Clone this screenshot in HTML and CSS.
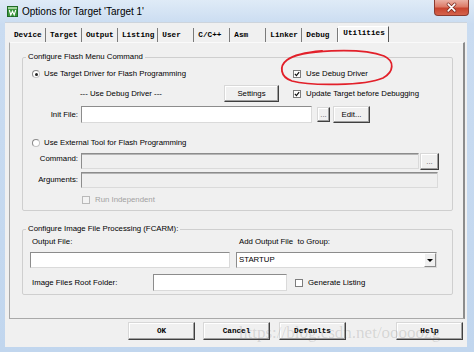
FILE: index.html
```html
<!DOCTYPE html>
<html lang="en">
<head>
    <meta charset="UTF-8">
    <title>Options for Target 'Target 1'</title>
    <link rel="stylesheet" href="styles.css">
</head>
<body>
<div class="window">
    <div class="titlebar">
        <svg class="app-icon" viewBox="0 0 11 11">
            <rect x="0.5" y="0.5" width="10" height="10" fill="#3b963c" stroke="#1f6a26"/>
            <rect x="1" y="1" width="9" height="2" fill="#9fd49a"/>
            <path d="M2.3 4 L3.8 9 L5.5 5.2 L7.2 9 L8.7 4" fill="none" stroke="#fff" stroke-width="1.1"/>
        </svg>
        <span class="title">Options for Target 'Target 1'</span>
        <div class="close-btn">
            <svg viewBox="0 0 35 16">
                <path d="M14 4.5 L21 11.5 M21 4.5 L14 11.5" stroke="#7a2a20" stroke-width="3.4" stroke-linecap="round"/>
                <path d="M14 4.5 L21 11.5 M21 4.5 L14 11.5" stroke="#fff" stroke-width="1.8" stroke-linecap="round"/>
            </svg>
        </div>
    </div>

    <div class="client">
        <div class="tabs">
            <span class="tab">Device</span>
            <span class="tab">Target</span>
            <span class="tab">Output</span>
            <span class="tab">Listing</span>
            <span class="tab">User</span>
            <span class="tab">C/C++</span>
            <span class="tab">Asm</span>
            <span class="tab">Linker</span>
            <span class="tab">Debug</span>
            <span class="tab active">Utilities</span>
        </div>

        <div class="tabpage">
            <!-- Flash menu -->
            <fieldset class="group flash">
                <legend>Configure Flash Menu Command</legend>

                <div class="row r1">
                    <div class="cell-left">
                        <span class="radio on"></span>
                        <span>Use Target Driver for Flash Programming</span>
                    </div>
                    <span class="check on"><svg viewBox="0 0 7 7"><path d="M1 3.4 L2.8 5.3 L6 1.2"/></svg></span>
                    <span class="check-label">Use Debug Driver</span>
                </div>

                <div class="row r2">
                    <div class="cell-driver">--- Use Debug Driver ---</div>
                    <div class="btn sans settings">Settings</div>
                    <span class="check on"><svg viewBox="0 0 7 7"><path d="M1 3.4 L2.8 5.3 L6 1.2"/></svg></span>
                    <span class="check-label">Update Target before Debugging</span>
                </div>

                <div class="row r3">
                    <label class="lbl">Init File:</label>
                    <div class="field init"></div>
                    <div class="btn sans dots small">...</div>
                    <div class="btn sans edit">Edit...</div>
                </div>

                <div class="row r4">
                    <span class="radio"></span>
                    <span>Use External Tool for Flash Programming</span>
                </div>

                <div class="row r5">
                    <label class="lbl">Command:</label>
                    <div class="field off command"></div>
                    <div class="btn sans dots cmd">...</div>
                </div>

                <div class="row r6">
                    <label class="lbl">Arguments:</label>
                    <div class="field off args"></div>
                </div>

                <div class="row r7">
                    <span class="check off"></span>
                    <span class="check-label disabled">Run Independent</span>
                </div>
            </fieldset>

            <!-- Image file processing -->
            <fieldset class="group image">
                <legend>Configure Image File Processing (FCARM):</legend>

                <div class="row ra">
                    <div class="cell-out">Output File:</div>
                    <div>Add Output File&nbsp; to Group:</div>
                </div>

                <div class="row rb">
                    <div class="field output"></div>
                    <div class="combo">
                        <span class="combo-text">STARTUP</span>
                        <span class="combo-arrow"><i></i></span>
                    </div>
                </div>

                <div class="row rc">
                    <div class="cell-root">Image Files Root Folder:</div>
                    <div class="field root"></div>
                    <span class="check gen"></span>
                    <span class="check-label">Generate Listing</span>
                </div>
            </fieldset>
        </div>

        <div class="buttons">
            <div class="btn dlg ok">OK</div>
            <div class="btn dlg cancel">Cancel</div>
            <div class="btn dlg defaults">Defaults</div>
            <div class="btn dlg help">Help</div>
        </div>
    </div>

    <div class="watermark">https://blog.csdn.net/ooooozg</div>

    <svg class="mark" viewBox="0 0 474 352">
        <path d="M287 60 C300 50, 360 47, 384 56 C395 61, 394 72, 383 78 C365 86, 310 86, 292 81 C280 77, 279 66, 287 60 C295 54, 310 52, 322 51"/>
    </svg>
</div>
</body>
</html>
```

FILE: styles.css
```css
body {
    margin: 0;
    font-family: "Liberation Sans", Arial, sans-serif;
    font-size: 7.8px;
    line-height: 12px;
    color: #000;
    background: #c4d9f0;
}

.window {
    position: relative;
    width: 474px;
    height: 352px;
    overflow: hidden;
    background: linear-gradient(#dfebf7, #cadcf1 24px, #c1d6ee);
}

/* title bar */
.titlebar {
    display: flex;
    align-items: center;
    height: 22px;
    padding: 0 5px 0 7px;
}

.app-icon {
    width: 11px;
    height: 11px;
}

.title {
    margin: 2px 0 0 4px;
    font-size: 10px;
}

.close-btn {
    align-self: flex-start;
    margin-left: auto;
    width: 35px;
    height: 16px;
    box-sizing: border-box;
    border: 1px solid #8b3b30;
    border-top: none;
    border-radius: 0 0 4px 4px;
    background: linear-gradient(#eab0a4, #dc7b68 45%, #c8442f 55%, #d4634c);
}

.close-btn svg {
    display: block;
    width: 33px;
    height: 15px;
}

/* client area */
.client {
    box-sizing: border-box;
    height: 325px;
    margin: 0 7px 0 5px;
    background: #f0f0f0;
    border-top: 1px solid #cdd4dc;
}

.tabs {
    display: flex;
    align-items: flex-end;
    height: 19px;
    padding-left: 5px;
}

.tab {
    box-sizing: border-box;
    min-width: 36px;
    height: 14px;
    padding: 0 3px 0 4px;
    border-right: 1px solid #7a7a7a;
    font: bold 7.7px/14px "Liberation Mono", monospace;
    white-space: pre;
}

.tab.active {
    height: 16px;
    line-height: 13px;
    background: #f6f6f6;
    border-top: 1px solid #fff;
    border-left: 1px solid #fff;
    border-right-color: #555;
}

.tabpage {
    box-sizing: border-box;
    height: 277px;
    margin: 0 2px 0 4px;
    padding: 0 10px 0 12px;
    border: 1px solid #a9a9a9;
    border-top-color: #fafafa;
    border-right: 2px solid #8c8c8c;
}

/* group boxes */
.group {
    margin: 0;
    padding: 0 0 3px;
    min-width: 0;
    border: 1px solid #cfcfcf;
    border-radius: 2px;
}

.group legend {
    margin-left: 3px;
    padding: 0 2px;
    line-height: 12px;
}

.flash {
    margin-top: 8px;
}

.image {
    margin-top: 12px;
}

.row {
    display: flex;
    align-items: center;
    white-space: nowrap;
}

.r1 { height: 14px; margin-top: 4px; }
.r2 { height: 17px; margin-top: 4px; }
.r3 { height: 17px; margin-top: 4px; }
.r4 { height: 14px; margin-top: 13px; padding-left: 9px; }
.r5 { height: 17px; margin-top: 3px; align-items: flex-start; }
.r6 { height: 16px; margin-top: 2px; }
.r7 { height: 14px; margin-top: 5px; padding-left: 59px; }

.ra { height: 12px; margin-top: 1px; }
.rb { height: 16px; margin-top: 4px; }
.rc { height: 17px; margin-top: 6px; }

.cell-left {
    display: flex;
    align-items: center;
    width: 270px;
    padding-left: 9px;
    box-sizing: border-box;
}

.cell-driver {
    width: 201px;
    padding-left: 57px;
    box-sizing: border-box;
}

.cell-out {
    width: 216px;
    padding-left: 9px;
    box-sizing: border-box;
}

.cell-root {
    width: 130px;
    padding-left: 9px;
    box-sizing: border-box;
}

.lbl {
    width: 55px;
    margin-right: 3px;
    text-align: right;
}

/* radio and check boxes */
.radio {
    box-sizing: border-box;
    position: relative;
    width: 8px;
    height: 8px;
    margin-right: 4px;
    border: 1px solid #8a8a8a;
    border-right-color: #c4c4c4;
    border-bottom-color: #c4c4c4;
    border-radius: 50%;
    background: #fff;
}

.radio.on::after {
    content: "";
    position: absolute;
    left: 1.5px;
    top: 1.5px;
    width: 3px;
    height: 3px;
    border-radius: 50%;
    background: #222;
}

.check {
    box-sizing: border-box;
    width: 8px;
    height: 8px;
    margin-right: 5px;
    border: 1px solid #7d7d7d;
    background: #fff;
}

.check svg {
    display: block;
    width: 6px;
    height: 6px;
}

.check path {
    fill: none;
    stroke: #111;
    stroke-width: 1.4;
}

.check.off {
    border-color: #b9b9b9;
    background: #f3f3f3;
}

.check.gen {
    margin-left: 8px;
}

.disabled {
    color: #a2a2a2;
}

/* edit fields */
.field {
    box-sizing: border-box;
    height: 16px;
    background: #fff;
    border: 1px solid;
    border-color: #8c8c8c #dadada #dadada #8c8c8c;
}

.field.off {
    background: #efefef;
    box-shadow: inset 0 1px #b5b5b5;
}

.init { width: 231px; height: 17px; }
.command { width: 338px; }
.args { width: 357px; }
.output { width: 200px; margin-left: 7px; }
.root { width: 134px; height: 17px; }

.combo {
    box-sizing: border-box;
    display: flex;
    align-items: center;
    width: 201px;
    height: 16px;
    margin-left: 6px;
    background: #fff;
    border: 1px solid;
    border-color: #8c8c8c #dadada #dadada #8c8c8c;
}

.combo-text {
    flex: 1;
    padding-left: 2px;
}

.combo-arrow {
    box-sizing: border-box;
    display: flex;
    align-items: center;
    justify-content: center;
    width: 12px;
    height: 14px;
    background: #f0f0f0;
    border: 1px solid;
    border-color: #fff #8a8a8a #8a8a8a #fff;
}

.combo-arrow i {
    width: 0;
    height: 0;
    border-top: 3px solid #000;
    border-left: 3px solid transparent;
    border-right: 3px solid transparent;
}

/* buttons */
.btn {
    box-sizing: border-box;
    display: flex;
    align-items: center;
    justify-content: center;
    background: #f0f0f0;
    border: 1px solid;
    border-color: #d8d8d8 #404040 #404040 #d8d8d8;
    box-shadow: inset -1px -1px #a0a0a0, inset 1px 1px #fff;
}

.btn.sans {
    font-family: "Liberation Sans", Arial, sans-serif;
}

.settings {
    width: 55px;
    height: 17px;
    margin-right: 14px;
}

.dots.small {
    width: 13px;
    height: 15px;
    margin-left: 5px;
    color: #555;
}

.edit {
    width: 37px;
    height: 17px;
    margin-left: 3px;
}

.dots.cmd {
    width: 19px;
    height: 17px;
    margin-left: 1px;
    color: #555;
}

.buttons {
    display: flex;
    margin-top: 3px;
    padding-left: 123px;
}

.btn.dlg {
    width: 67px;
    height: 18px;
    font: bold 7.7px/12px "Liberation Mono", monospace;
}

.cancel { margin-left: 8px; }
.defaults { margin-left: 9px; }
.help { margin-left: 50px; width: 68px; }

/* overlays */
.watermark {
    position: absolute;
    left: 239px;
    top: 323px;
    font: 17px "Liberation Serif", serif;
    color: rgba(80, 80, 80, 0.18);
    white-space: nowrap;
}

.mark {
    position: absolute;
    left: 0;
    top: 0;
    width: 474px;
    height: 352px;
    pointer-events: none;
}

.mark path {
    fill: none;
    stroke: #e2202a;
    stroke-width: 1.8;
    stroke-linecap: round;
}
```
